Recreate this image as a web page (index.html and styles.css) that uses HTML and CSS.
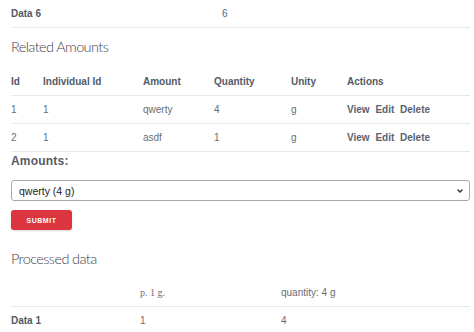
FILE: index.html
```html
<!DOCTYPE html>
<html lang="en">
<head>
    <meta charset="UTF-8">
    <title>Individual</title>
    <link rel="stylesheet" href="styles.css">
</head>
<body>
<div class="wrap">
    <table class="table info">
        <tr>
            <th class="c-name">Data 6</th>
            <td>6</td>
        </tr>
    </table>

    <h2 class="title">Related Amounts</h2>
    <table class="table amounts">
        <tr class="head">
            <th class="c-id">Id</th>
            <th class="c-ind">Individual Id</th>
            <th class="c-amount">Amount</th>
            <th class="c-qty">Quantity</th>
            <th class="c-unity">Unity</th>
            <th>Actions</th>
        </tr>
        <tr>
            <td>1</td>
            <td>1</td>
            <td>qwerty</td>
            <td>4</td>
            <td>g</td>
            <td class="actions"><a href="#">View</a> <a href="#">Edit</a> <a href="#">Delete</a></td>
        </tr>
        <tr>
            <td>2</td>
            <td>1</td>
            <td>asdf</td>
            <td>1</td>
            <td>g</td>
            <td class="actions"><a href="#">View</a> <a href="#">Edit</a> <a href="#">Delete</a></td>
        </tr>
    </table>

    <form class="form">
        <label class="label" for="amount">Amounts:</label>
        <div class="select">
            <span>qwerty (4 g)</span>
            <svg width="8" height="6" viewBox="0 0 8 6"><path d="M1.5 1.5 L4 4 L6.5 1.5" fill="none" stroke="#333" stroke-width="1.4"/></svg>
        </div>
        <button type="button" class="btn-submit">Submit</button>
    </form>

    <h2 class="title processed">Processed data</h2>
    <table class="table processed-table">
        <tr class="head">
            <th class="c-pname"></th>
            <td class="c-pval serif">p. 1 g.</td>
            <td>quantity: 4 g</td>
        </tr>
        <tr>
            <th>Data 1</th>
            <td>1</td>
            <td>4</td>
        </tr>
    </table>
</div>
</body>
</html>
```

FILE: styles.css
```css
body {
    margin: 0;
    background-color: #ffffff;
    font-family: "Liberation Sans", Arial, sans-serif;
    color: #666a73;
    overflow: hidden;
}
.wrap {
    padding: 0 4px 0 11px;
}
.table {
    width: 100%;
    border-collapse: collapse;
    font-size: 10px;
}
.table th,
.table td {
    height: 27px;
    padding: 0;
    line-height: 13px;
    text-align: left;
    vertical-align: middle;
    border-bottom: 1px solid #e6e8ec;
}
.table th {
    font-weight: bold;
    color: #525a66;
}
.table td {
    color: #696d74;
}
.info .c-name {
    width: 211px;
}
.info td {
    color: #3f6a94;
}
.title {
    margin: 9px 0 11px 0;
    font-family: Lato, "Open Sans", sans-serif;
    font-weight: 300;
    font-size: 14.5px;
    line-height: 20px;
    color: #3f424a;
    letter-spacing: -0.6px;
}
.title.processed {
    margin-top: 19px;
    margin-bottom: 10px;
}
.c-id { width: 32px; }
.c-ind { width: 100px; }
.c-amount { width: 71px; }
.c-qty { width: 77px; }
.c-unity { width: 56px; }
.actions a {
    color: #5a6270;
    font-weight: bold;
    text-decoration: none;
    margin-right: 3px;
}
.form {
    margin: 0;
}
.label {
    display: block;
    font-size: 12px;
    font-weight: bold;
    line-height: 18px;
    color: #555a62;
    letter-spacing: 0.2px;
}
.select {
    margin-top: 10px;
    height: 19px;
    border: 1px solid #a9a9a9;
    border-radius: 3px;
    display: flex;
    align-items: center;
    justify-content: space-between;
    padding: 0 5px 0 7px;
    font-size: 10.5px;
    color: #222222;
}
.btn-submit {
    display: block;
    margin-top: 9px;
    width: 61px;
    height: 20px;
    padding: 0;
    border: none;
    border-radius: 3px;
    background-color: #dc3540;
    color: #ffffff;
    font-family: "Liberation Sans", Arial, sans-serif;
    font-size: 7px;
    font-weight: bold;
    letter-spacing: 0.5px;
    text-transform: uppercase;
    box-shadow: 0 1px 2px rgba(0, 0, 0, 0.15);
}
.processed-table .c-pname {
    width: 129px;
}
.processed-table .c-pval {
    width: 141px;
}
.serif {
    font-family: "Liberation Serif", "Times New Roman", serif;
}
```
